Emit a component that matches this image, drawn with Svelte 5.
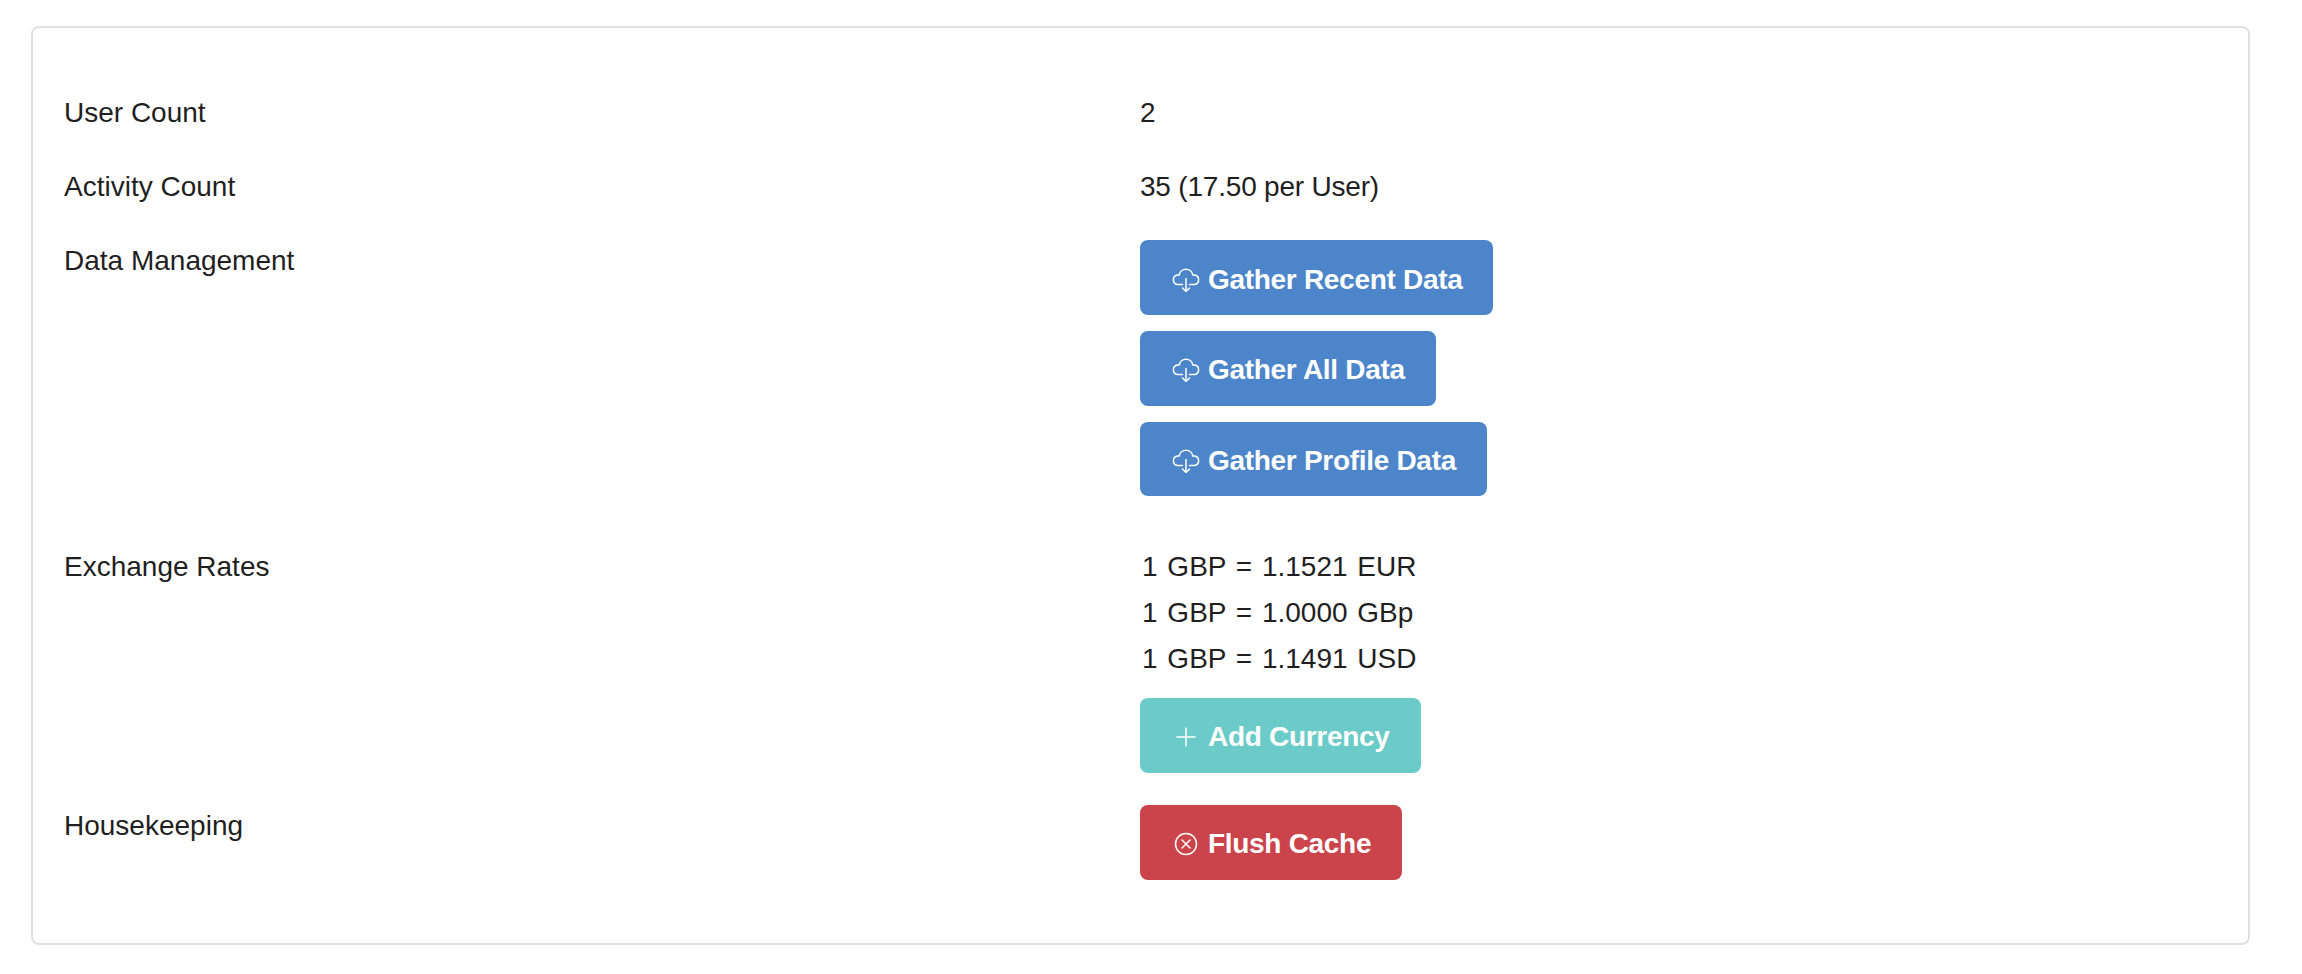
<script>
	const rates = ['1 GBP = 1.1521 EUR', '1 GBP = 1.0000 GBp', '1 GBP = 1.1491 USD'];
	const gather = ['Gather Recent Data', 'Gather All Data', 'Gather Profile Data'];
</script>

<div class="card">
	<div class="label">User Count</div>
	<div>2</div>

	<div class="label">Activity Count</div>
	<div class="activity">35 (17.50 per User)</div>

	<div class="label">Data Management</div>
	<div class="stack gather">
		{#each gather as text}
			<button class="btn primary">
				<svg class="icon" viewBox="0 0 28 24" fill="none" stroke="currentColor" stroke-width="1.5" stroke-linecap="round" stroke-linejoin="round">
					<path d="M10.5 16.5H5.5A4.8 4.8 0 0 1 5.5 7H7.2A6.9 6.9 0 0 1 20.8 7H22.5A4.8 4.8 0 0 1 22.5 16.5H17.5" />
					<path d="M14 10.5V23.5M10.5 20L14 23.5L17.5 20" />
				</svg>
				{text}
			</button>
		{/each}
	</div>

	<div class="label">Exchange Rates</div>
	<div class="stack exchange">
		<div class="rates">
			{#each rates as rate}
				<div>{rate}</div>
			{/each}
		</div>
		<button class="btn info">
			<svg class="icon" viewBox="0 0 28 24" fill="none" stroke="currentColor" stroke-width="1.5" stroke-linecap="round">
				<path d="M14 3V21M5 12H23" />
			</svg>
			Add Currency
		</button>
	</div>

	<div class="label">Housekeeping</div>
	<div class="stack house">
		<button class="btn danger">
			<svg class="icon" viewBox="0 0 28 24" fill="none" stroke="currentColor" stroke-width="1.5" stroke-linecap="round">
				<circle cx="14" cy="12" r="10.5" />
				<path d="M10 8L18 16M18 8L10 16" />
			</svg>
			Flush Cache
		</button>
	</div>
</div>

<style>
	:global(body) {
		background: #fff;
		color: #1f1f1f;
		font-family: "Liberation Sans", Arial, sans-serif;
		font-size: 28px;
		line-height: 46px;
	}

	.card {
		display: grid;
		grid-template-columns: 1076px 1fr;
		row-gap: 28px;
		margin: 26px 52px 0 31px;
		padding: 62px 31px 63px;
		border: 2px solid #e0e0e0;
		border-radius: 8px;
	}

	.activity {
		letter-spacing: -0.2px;
	}

	.stack {
		display: flex;
		flex-direction: column;
		align-items: flex-start;
		gap: 16.4px;
	}

	.gather {
		padding: 2.4px 0 19.2px;
	}

	.exchange {
		padding-bottom: 2px;
	}

	.house {
		padding-top: 2px;
	}

	.rates {
		padding-left: 2px;
		word-spacing: 2px;
	}

	.btn {
		display: flex;
		align-items: center;
		gap: 8px;
		height: 75px;
		padding: 4px 31px 0 32px;
		border: none;
		border-radius: 8px;
		color: #fff;
		font: bold 28px "Liberation Sans", Arial, sans-serif;
		letter-spacing: -0.3px;
	}

	.gather .btn {
		height: 74.4px;
	}

	.icon {
		width: 28px;
		height: 24px;
	}

	.primary { background: #4c85c9; }
	.info { background: #6acbc8; }
	.danger { background: #cc444b; }
</style>
